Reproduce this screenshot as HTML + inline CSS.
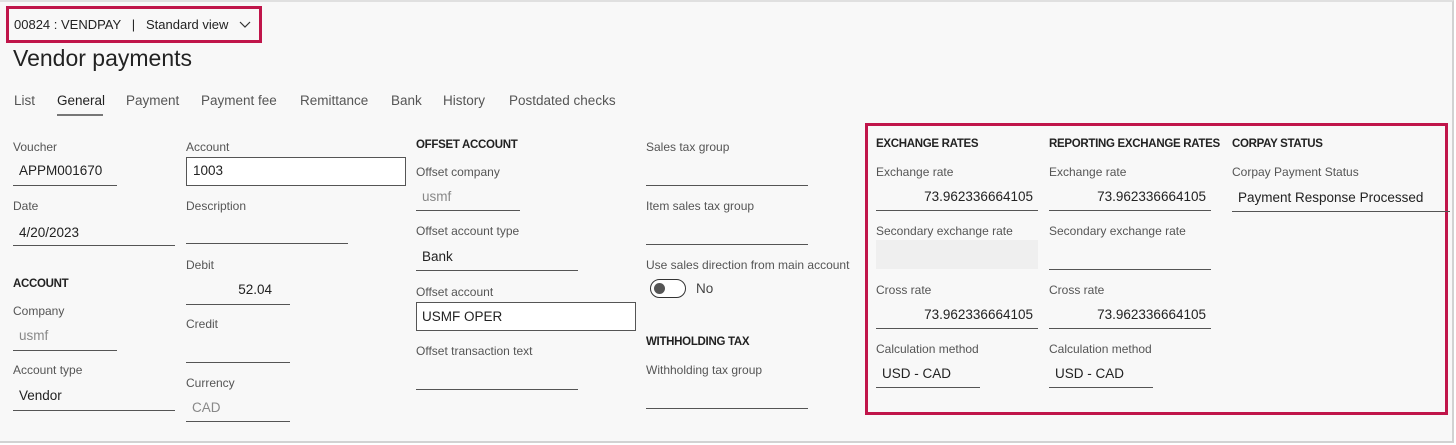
<!DOCTYPE html>
<html><head><meta charset="utf-8"><style>
*{margin:0;padding:0;box-sizing:border-box}
body{width:1456px;height:445px;background:#fff;font-family:"Liberation Sans",sans-serif;position:relative;overflow:hidden}
#pg{position:absolute;left:0;top:0;width:1454px;height:443px;background:#f8f8f8;border-right:2px solid #d2d2d2;border-bottom:2px solid #d2d2d2;border-top:2px solid #e0e0e0}
.t{position:absolute;white-space:nowrap;line-height:16px}
.l{font-size:12px;color:#555}
.v{font-size:13.5px;color:#222}
.g{color:#888}
.h{font-size:11.5px;font-weight:bold;color:#222;letter-spacing:-0.3px}
.u{position:absolute;height:1px;background:#555}
.r{text-align:right}
.box{position:absolute;background:#fff;border:1px solid #555}
.red{position:absolute;border:3px solid #c0154a}
.tab{position:absolute;top:93px;font-size:13.5px;color:#555;line-height:16px}
</style></head><body><div id="pg"></div>
<div class="red" style="left:6px;top:6px;width:256px;height:37px"></div>
<div class="t" style="left:14px;top:17px;font-size:13px;color:#222">00824 : VENDPAY &nbsp; | &nbsp; Standard view</div>
<svg style="position:absolute;left:239px;top:21px" width="12" height="8"><path d="M1 1L6 6L11 1" stroke="#333" fill="none" stroke-width="1.2"/></svg>
<div class="t" style="left:13px;top:45px;font-size:23px;line-height:26px;color:#222">Vendor payments</div>
<div class="tab" style="left:14px">List</div>
<div class="tab" style="left:57px;color:#222">General</div>
<div class="u" style="left:57px;top:114px;width:46px;height:2px;background:#777"></div>
<div class="tab" style="left:126px">Payment</div>
<div class="tab" style="left:201px">Payment fee</div>
<div class="tab" style="left:300px">Remittance</div>
<div class="tab" style="left:391px">Bank</div>
<div class="tab" style="left:443px">History</div>
<div class="tab" style="left:509px">Postdated checks</div>

<div class="t l" style="left:13px;top:139px">Voucher</div>
<div class="t v" style="left:19px;top:163px">APPM001670</div><div class="u" style="left:13px;top:185px;width:104px"></div>
<div class="t l" style="left:13px;top:198px">Date</div>
<div class="t v" style="left:19px;top:225px">4/20/2023</div><div class="u" style="left:13px;top:245px;width:162px"></div>
<div class="t h" style="left:13px;top:276px">ACCOUNT</div>
<div class="t l" style="left:13px;top:303px">Company</div>
<div class="t v g" style="left:19px;top:328px">usmf</div><div class="u" style="left:13px;top:350px;width:104px"></div>
<div class="t l" style="left:13px;top:362px">Account type</div>
<div class="t v" style="left:19px;top:388px">Vendor</div><div class="u" style="left:13px;top:410px;width:162px"></div>

<div class="t l" style="left:186px;top:139px">Account</div>
<div class="box" style="left:186px;top:157px;width:220px;height:29px"></div>
<div class="t v" style="left:193px;top:163px">1003</div>
<div class="t l" style="left:186px;top:198px">Description</div><div class="u" style="left:186px;top:243px;width:162px"></div>
<div class="t l" style="left:186px;top:257px">Debit</div>
<div class="t v r" style="left:186px;top:282px;width:86px">52.04</div><div class="u" style="left:186px;top:304px;width:104px"></div>
<div class="t l" style="left:186px;top:316px">Credit</div><div class="u" style="left:186px;top:362px;width:104px"></div>
<div class="t l" style="left:186px;top:375px">Currency</div>
<div class="t v g" style="left:192px;top:400px">CAD</div><div class="u" style="left:186px;top:421px;width:104px"></div>

<div class="t h" style="left:416px;top:137px">OFFSET ACCOUNT</div>
<div class="t l" style="left:416px;top:164px">Offset company</div>
<div class="t v g" style="left:422px;top:189px">usmf</div><div class="u" style="left:416px;top:210px;width:104px"></div>
<div class="t l" style="left:416px;top:223px">Offset account type</div>
<div class="t v" style="left:422px;top:249px">Bank</div><div class="u" style="left:416px;top:270px;width:162px"></div>
<div class="t l" style="left:416px;top:284px">Offset account</div>
<div class="box" style="left:416px;top:302px;width:220px;height:29px"></div>
<div class="t v" style="left:422px;top:309px">USMF OPER</div>
<div class="t l" style="left:416px;top:343px">Offset transaction text</div><div class="u" style="left:416px;top:389px;width:162px"></div>

<div class="t l" style="left:646px;top:139px">Sales tax group</div><div class="u" style="left:646px;top:185px;width:162px"></div>
<div class="t l" style="left:646px;top:198px">Item sales tax group</div><div class="u" style="left:646px;top:244px;width:162px"></div>
<div class="t l" style="left:646px;top:257px">Use sales direction from main account</div>
<div style="position:absolute;left:650px;top:279px;width:36px;height:19px;border:1px solid #333;border-radius:10px;background:#fff"></div>
<div style="position:absolute;left:654px;top:283px;width:11px;height:11px;border-radius:6px;background:#555"></div>
<div class="t v" style="left:696px;top:281px;color:#444">No</div>
<div class="t h" style="left:646px;top:334px">WITHHOLDING TAX</div>
<div class="t l" style="left:646px;top:362px">Withholding tax group</div><div class="u" style="left:646px;top:408px;width:162px"></div>

<div class="red" style="left:865px;top:123px;width:583px;height:292px"></div>
<div class="t h" style="left:876px;top:136px">EXCHANGE RATES</div>
<div class="t l" style="left:876px;top:164px">Exchange rate</div>
<div class="t v r" style="left:876px;top:189px;width:157px">73.962336664105</div><div class="u" style="left:876px;top:210px;width:162px"></div>
<div class="t l" style="left:876px;top:223px">Secondary exchange rate</div>
<div style="position:absolute;left:876px;top:240px;width:162px;height:29px;background:#efefef"></div>
<div class="t l" style="left:876px;top:282px">Cross rate</div>
<div class="t v r" style="left:876px;top:307px;width:157px">73.962336664105</div><div class="u" style="left:876px;top:328px;width:162px"></div>
<div class="t l" style="left:876px;top:341px">Calculation method</div>
<div class="t v" style="left:882px;top:366px">USD - CAD</div><div class="u" style="left:876px;top:387px;width:104px"></div>

<div class="t h" style="left:1049px;top:136px">REPORTING EXCHANGE RATES</div>
<div class="t l" style="left:1049px;top:164px">Exchange rate</div>
<div class="t v r" style="left:1049px;top:189px;width:157px">73.962336664105</div><div class="u" style="left:1049px;top:210px;width:162px"></div>
<div class="t l" style="left:1049px;top:223px">Secondary exchange rate</div><div class="u" style="left:1049px;top:269px;width:162px"></div>
<div class="t l" style="left:1049px;top:282px">Cross rate</div>
<div class="t v r" style="left:1049px;top:307px;width:157px">73.962336664105</div><div class="u" style="left:1049px;top:328px;width:162px"></div>
<div class="t l" style="left:1049px;top:341px">Calculation method</div>
<div class="t v" style="left:1055px;top:366px">USD - CAD</div><div class="u" style="left:1049px;top:387px;width:104px"></div>

<div class="t h" style="left:1232px;top:136px">CORPAY STATUS</div>
<div class="t l" style="left:1232px;top:164px">Corpay Payment Status</div>
<div class="t v" style="left:1238px;top:190px">Payment Response Processed</div><div class="u" style="left:1232px;top:211px;width:218px"></div>
</body></html>
